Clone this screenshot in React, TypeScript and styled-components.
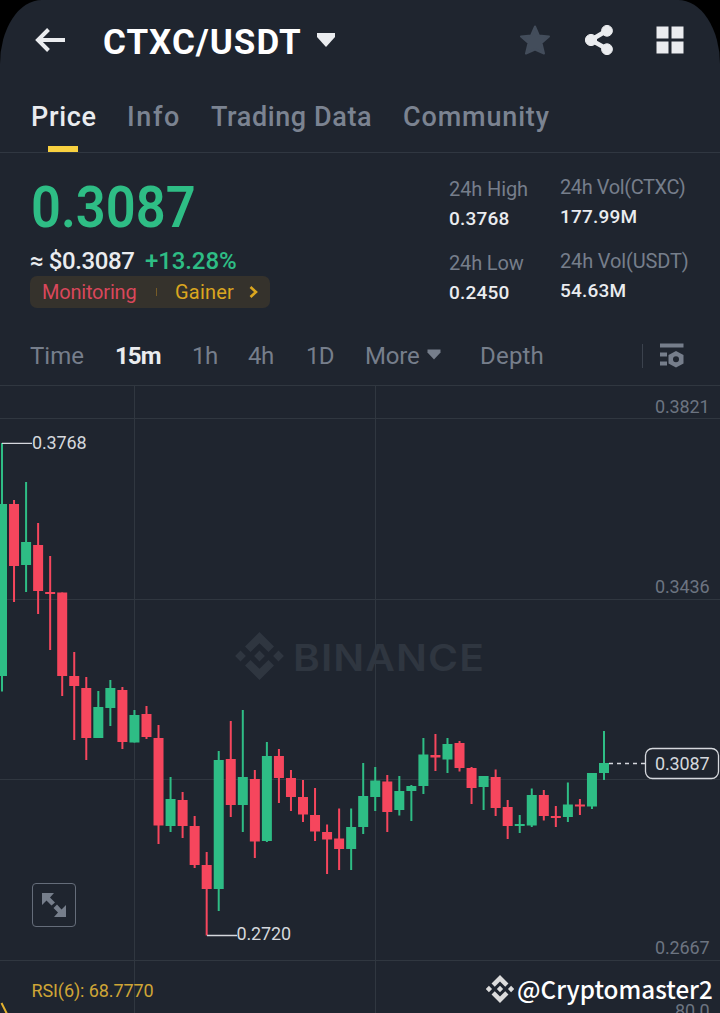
import React from "react";
import styled, { createGlobalStyle } from "styled-components";

const GlobalStyle = createGlobalStyle`
  * { box-sizing: border-box; }
  body { margin: 0; background: #000; }
`;

const Screen = styled.main`
  width: 720px;
  height: 1013px;
  overflow: hidden;
  display: flex;
  flex-direction: column;
  background: #1f252f;
  border-radius: 42px 42px 0 0 / 64px 64px 0 0;
  font-family: Roboto, "Noto Sans", sans-serif;
  color: #eaecef;
`;

const Header = styled.header`
  height: 82px;
  display: flex;
  align-items: center;
  padding: 0 36px 2px 34px;
`;

const Pair = styled.h1<{ $spacing: number }>`
  margin: 5px 0 0 36px;
  width: 213px;
  font-size: 35px;
  line-height: 42px;
  font-weight: 700;
  letter-spacing: ${(p) => p.$spacing}px;
  color: #fff;
  white-space: nowrap;
`;

const Actions = styled.div`
  margin-left: auto;
  display: flex;
  align-items: center;
`;

const ActionIcon = styled.svg<{ $gap?: number }>`
  display: block;
  margin-left: ${(p) => p.$gap ?? 0}px;
`;

const Tabs = styled.nav`
  height: 71px;
  display: flex;
  padding-left: 31px;
  border-bottom: 1px solid #303741;
`;

const Tab = styled.div<{ $active?: boolean; $width: number; $spacing: number }>`
  width: ${(p) => p.$width}px;
  display: flex;
  flex-direction: column;
  justify-content: space-between;
  padding-top: 18px;
  font-size: 27px;
  line-height: 34px;
  font-weight: 500;
  letter-spacing: ${(p) => p.$spacing}px;
  white-space: nowrap;
  color: ${(p) => (p.$active ? "#eaecef" : "#7b8391")};
`;

const Underline = styled.span`
  width: 30px;
  height: 6px;
  margin-left: 17px;
  background: #f8d140;
`;

const Summary = styled.section`
  height: 174px;
  display: flex;
  padding-left: 30px;
`;

const PriceColumn = styled.div`
  width: 419px;
  padding-top: 24px;
`;

const LastPrice = styled.div`
  height: 62px;
  font-size: 57px;
  line-height: 62px;
  font-weight: 600;
  color: #2ebd85;
  white-space: nowrap;
  transform: scaleX(0.92);
  transform-origin: left;
  padding-left: 1px;
`;

const Conversion = styled.div`
  height: 34px;
  display: flex;
  padding-top: 6px;
  font-size: 24px;
  line-height: 32px;
  font-weight: 500;
  white-space: nowrap;
`;

const Fiat = styled.span`
  width: 115px;
  letter-spacing: -0.4px;
`;

const Change = styled.span`
  color: #2ebd85;
  letter-spacing: -0.1px;
`;

const Tag = styled.div`
  width: 240px;
  height: 32px;
  margin-top: 3px;
  display: flex;
  align-items: center;
  padding: 0 11px 0 12px;
  border-radius: 7px;
  background: #35322c;
  font-size: 20px;
  line-height: 32px;
`;

const TagText = styled.span<{ $color: string; $width: number; $spacing: number }>`
  width: ${(p) => p.$width}px;
  color: ${(p) => p.$color};
  letter-spacing: ${(p) => p.$spacing}px;
`;

const TagDivider = styled.span`
  width: 1px;
  height: 8px;
  margin-right: 18px;
  background: #765b27;
`;

const StatColumn = styled.div<{ $width: number; $top: number }>`
  width: ${(p) => p.$width}px;
  padding-top: ${(p) => p.$top}px;
  display: flex;
  flex-direction: column;
  gap: 15px;
`;

const Stat = styled.div`
  height: 59px;
  display: flex;
  flex-direction: column;
  white-space: nowrap;
`;

const StatLabel = styled.span<{ $spacing: number }>`
  font-size: 20px;
  line-height: 30px;
  color: #767e8b;
  letter-spacing: ${(p) => p.$spacing}px;
`;

const StatValue = styled.span<{ $spacing: number }>`
  font-size: 19px;
  line-height: 30px;
  font-weight: 500;
  letter-spacing: ${(p) => p.$spacing}px;
`;

const Intervals = styled.nav`
  height: 58px;
  display: flex;
  align-items: center;
  padding-left: 30px;
`;

const Interval = styled.span<{ $active?: boolean; $width: number; $spacing: number }>`
  width: ${(p) => p.$width}px;
  display: flex;
  align-items: center;
  font-size: 24px;
  line-height: 30px;
  font-weight: ${(p) => (p.$active ? 700 : 400)};
  letter-spacing: ${(p) => p.$spacing}px;
  color: ${(p) => (p.$active ? "#eaecef" : "#767e8b")};
  white-space: nowrap;
`;

const IntervalDivider = styled.span`
  width: 1px;
  height: 24px;
  margin-right: 16px;
  background: #3b424d;
`;

const ChartArea = styled.section`
  height: 628px;
  position: relative;
`;

const ChartSvg = styled.svg`
  display: block;
`;

const ExpandButton = styled.button`
  position: absolute;
  left: 32px;
  top: 498px;
  width: 44px;
  height: 44px;
  padding: 0;
  display: grid;
  place-items: center;
  border: 1.5px solid #656d7a;
  border-radius: 4px;
  background: transparent;
`;

const Credit = styled.div`
  position: absolute;
  left: 486px;
  top: 584px;
  height: 40px;
  display: flex;
  align-items: center;
  gap: 3px;
  font: 500 24.2px/40px "Noto Sans CJK SC", "Noto Sans", sans-serif;
  color: #fff;
  white-space: nowrap;
`;

const CreditName = styled.span`
  height: 40px;
`;

type Candle = [boolean, number, number, number, number];
const up = true;
const down = false;

// direction, body top, body bottom, wick top, wick bottom
const candles: Candle[] = [
  [up, 504, 676, 443, 691.5],
  [down, 504, 566, 500, 602],
  [up, 542, 565, 482, 592],
  [down, 545, 591, 523, 614],
  [down, 592, 594, 556, 650],
  [down, 592.5, 676, 592.5, 696],
  [down, 676, 686, 652, 740],
  [down, 688, 738, 677, 760],
  [up, 707, 738, 691, 738],
  [up, 688, 708, 680, 726],
  [down, 690, 742, 687, 749],
  [up, 715, 742.5, 710, 742.5],
  [down, 714, 737, 706, 739],
  [down, 738, 825.5, 725, 844],
  [up, 799, 826, 777, 832],
  [down, 800, 826, 792, 838],
  [down, 826, 865, 816, 868],
  [down, 865, 889, 852, 935.5],
  [up, 760, 889, 751, 911],
  [down, 759, 805, 721, 817],
  [up, 777, 805, 710, 832],
  [down, 779, 841.5, 770, 858],
  [up, 756, 841, 742, 842],
  [down, 756, 778, 749, 803],
  [down, 778, 797, 770, 811],
  [down, 797, 814.5, 780, 822],
  [down, 815, 831.5, 788, 841],
  [down, 832, 839.5, 824.5, 874],
  [down, 838.5, 849, 808.5, 870],
  [up, 827, 849, 808.5, 870],
  [up, 796, 827, 763, 834],
  [up, 780.5, 797, 767, 811],
  [down, 781.5, 812, 775, 832],
  [up, 791, 810, 776, 815.5],
  [up, 786, 791, 785, 821],
  [up, 754.5, 786, 738, 794],
  [down, 755, 757.5, 734, 771],
  [up, 744, 759.5, 738, 773],
  [down, 743, 768, 741, 771.5],
  [down, 768, 788, 767, 804],
  [up, 776, 787, 776, 810],
  [down, 777, 808, 769.5, 816],
  [down, 807, 826, 800, 839],
  [up, 824, 826, 815, 833],
  [up, 795, 825.5, 788.5, 827],
  [down, 795, 816, 790, 820.5],
  [down, 816, 818, 806, 827],
  [up, 804.5, 817, 782.5, 822],
  [down, 804.5, 806.5, 799, 815],
  [up, 773, 806.5, 773, 809],
  [up, 763, 773, 731, 780],
];

const diamond = (cx: number, cy: number, r: number) =>
  `M${cx} ${cy - r}L${cx + r} ${cy}L${cx} ${cy + r}L${cx - r} ${cy}Z`;

const logoPath = [
  diamond(24, 24, 5.4),
  diamond(5, 24, 5.4),
  diamond(43, 24, 5.4),
  "M24 0L38.5 14.5L33 20L24 11.2L15 20L9.5 14.5Z",
  "M24 48L38.5 33.5L33 28L24 36.8L15 28L9.5 33.5Z",
].join("");

function Chart() {
  return (
    <ChartSvg width="720" height="628" viewBox="0 385 720 628">
      <g stroke="#303740" strokeWidth="1">
        <path d="M0 385.5H720M0 418.5H720M0 599.5H720M0 779.5H720M0 960.5H720" />
        <path d="M134.5 385V1013M375.5 385V1013" />
      </g>
      <g fill="#2f3640">
        <path transform="translate(235.500 632)" d={logoPath} />
        <text
          x="293"
          y="670.5"
          fontFamily="Inter, sans-serif"
          fontWeight="600"
          fontSize="37"
          letterSpacing="1"
          textLength="192"
          lengthAdjust="spacingAndGlyphs"
        >
          BINANCE
        </text>
      </g>
      {candles.map(([rising, top, bottom, high, low], i) => {
        const x = 2 + i * 12.04;
        return (
          <g key={i} fill={rising ? "#2ebd85" : "#f6465d"}>
            <rect x={x - 1} y={high} width="2" height={low - high} />
            <rect x={x - 5} y={top} width="10" height={bottom - top} />
          </g>
        );
      })}
      <g stroke="#d5d8dd" strokeWidth="1.3" fill="none">
        <path d="M2 443.3H32M207 935.5H237" />
        <path d="M609 763.5H645" strokeDasharray="4 4" />
        <rect x="645.5" y="748.5" width="73" height="30" rx="7" fill="#1f252f" />
      </g>
      <g fontFamily="Roboto, sans-serif" fontSize="18" letterSpacing="-0.15" fill="#d5d8dd">
        <text x="32" y="449">0.3768</text>
        <text x="236.500" y="940">0.2720</text>
        <text x="655" y="770">0.3087</text>
      </g>
      <g fontFamily="Roboto, sans-serif" fontSize="18" letterSpacing="-0.15" fill="#6c7481" textAnchor="end">
        <text x="709.500" y="413">0.3821</text>
        <text x="709.500" y="593">0.3436</text>
        <text x="709.500" y="954">0.2667</text>
        <text x="709.500" y="1017">80.0</text>
      </g>
      <text x="31.500" y="997" fontFamily="Roboto, sans-serif" fontSize="18" letterSpacing="-0.1" fill="#cfa536">
        RSI(6): 68.7770
      </text>
      <path d="M1.500 1003L7 1014" stroke="#e5b32f" strokeWidth="2" />
    </ChartSvg>
  );
}

export default function App() {
  return (
    <>
      <GlobalStyle />
      <Screen>
        <Header>
          <ActionIcon width="33" height="26" viewBox="0 0 33 26" fill="none" stroke="#eaecef" strokeWidth="4">
            <path d="M31 13H4M14.500 2.500L4 13L14.500 23.500" />
          </ActionIcon>
          <Pair $spacing={1}>CTXC/USDT</Pair>
          <ActionIcon width="20" height="16" viewBox="0 0 20 16" fill="#eaecef">
            <path d="M1 1H19V5L10 15L1 5Z" />
          </ActionIcon>
          <Actions>
            <ActionIcon width="32" height="32" viewBox="0 0 32 32" fill="#434d5b" stroke="#434d5b" strokeWidth="2" strokeLinejoin="round">
              <path d="M16 2.500L19.900 11.500L30 12.500L22.500 19L25 29.500L16 25.500L7 29.500L9.500 19L2 12.500L12.100 11.500Z" />
            </ActionIcon>
            <ActionIcon $gap={33} width="30" height="32" viewBox="0 0 30 32" fill="#eaecef" stroke="#eaecef">
              <path d="M23 6.500L7 16L23 25" fill="none" strokeWidth="4.500" />
              <circle cx="7" cy="16" r="5.600" />
              <circle cx="23" cy="6.800" r="5.400" />
              <circle cx="23" cy="25.200" r="5.400" />
            </ActionIcon>
            <ActionIcon $gap={42} width="28" height="28" viewBox="0 0 28 28" fill="#eaecef">
              <path d="M0.500 0.500H12.500V12.500H0.500ZM15.500 0.500H27.500V12.500H15.500ZM0.500 15.500H12.500V27.500H0.500ZM15.500 15.500H27.500V27.500H15.500Z" />
            </ActionIcon>
          </Actions>
        </Header>

        <Tabs>
          <Tab $active $width={96} $spacing={0.7}>
            Price
            <Underline />
          </Tab>
          <Tab $width={84} $spacing={1.6}>Info</Tab>
          <Tab $width={192} $spacing={0.6}>Trading Data</Tab>
          <Tab $width={150} $spacing={0.85}>Community</Tab>
        </Tabs>

        <Summary>
          <PriceColumn>
            <LastPrice>0.3087</LastPrice>
            <Conversion>
              <Fiat>≈ $0.3087</Fiat>
              <Change>+13.28%</Change>
            </Conversion>
            <Tag>
              <TagText $color="#d9475b" $width={114} $spacing={-0.2}>Monitoring</TagText>
              <TagDivider />
              <TagText $color="#dba61f" $width={74} $spacing={0.2}>Gainer</TagText>
              <ActionIcon width="9" height="14" viewBox="0 0 9 14" fill="none" stroke="#dba61f" strokeWidth="2.6">
                <path d="M1.500 2L7 7L1.500 12" />
              </ActionIcon>
            </Tag>
          </PriceColumn>
          <StatColumn $width={111} $top={21}>
            <Stat>
              <StatLabel $spacing={-0.1}>24h High</StatLabel>
              <StatValue $spacing={0.2}>0.3768</StatValue>
            </Stat>
            <Stat>
              <StatLabel $spacing={-0.15}>24h Low</StatLabel>
              <StatValue $spacing={0.2}>0.2450</StatValue>
            </Stat>
          </StatColumn>
          <StatColumn $width={150} $top={19}>
            <Stat>
              <StatLabel $spacing={-0.4}>24h Vol(CTXC)</StatLabel>
              <StatValue $spacing={0.2}>177.99M</StatValue>
            </Stat>
            <Stat>
              <StatLabel $spacing={-0.15}>24h Vol(USDT)</StatLabel>
              <StatValue $spacing={0.2}>54.63M</StatValue>
            </Stat>
          </StatColumn>
        </Summary>

        <Intervals>
          <Interval $width={85} $spacing={0}>Time</Interval>
          <Interval $active $width={77} $spacing={-0.9}>15m</Interval>
          <Interval $width={56} $spacing={-0.6}>1h</Interval>
          <Interval $width={58} $spacing={-0.5}>4h</Interval>
          <Interval $width={59} $spacing={-0.8}>1D</Interval>
          <Interval $width={115} $spacing={-0.2}>
            More
            <ActionIcon $gap={8} width="14" height="14" viewBox="0 0 14 14" fill="#767e8b">
              <path d="M0.500 0.500H13.500V3.500L7 10.500L0.500 3.500Z" />
            </ActionIcon>
          </Interval>
          <Interval $width={162} $spacing={0.2}>Depth</Interval>
          <IntervalDivider />
          <ActionIcon width="26" height="26" viewBox="0 0 26 26" fill="#767e8b">
            <path d="M1 0.500H24.500V4.500H1ZM1 9.500H8V13.500H1ZM1 18.500H8V22.500H1Z" />
            <path fillRule="evenodd" d="M17 8L24.500 12V20.500L17 24.500L9.500 20.500V12ZM17 13.200A3 3 0 1 0 17 19.200A3 3 0 1 0 17 13.200Z" />
          </ActionIcon>
        </Intervals>

        <ChartArea>
          <Chart />
          <ExpandButton aria-label="Expand chart">
            <ActionIcon width="26" height="26" viewBox="0 0 26 26" fill="#767e8b">
              <path d="M1 1H13L9 5.500L14 10.500L10.500 13.500L5.500 8.500L1 13Z" />
              <path d="M25 25H13L17 20.500L12.500 16L16 12.500L20.500 17.500L25 13Z" />
            </ActionIcon>
          </ExpandButton>
          <Credit>
            <ActionIcon width="28" height="28" viewBox="0 0 48 48" fill="#dcdcdc">
              <path d={logoPath} />
            </ActionIcon>
            <CreditName>@Cryptomaster2</CreditName>
          </Credit>
        </ChartArea>
      </Screen>
    </>
  );
}
